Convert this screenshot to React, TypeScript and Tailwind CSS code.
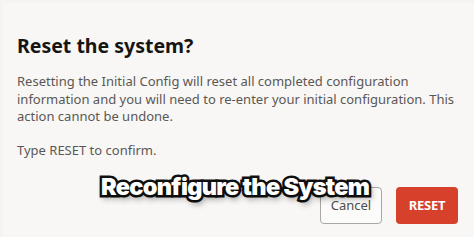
export default function App() {
  return (
    <div className="relative h-[237px] w-[474px] overflow-hidden bg-[#f4f3f1] font-['Noto_Sans',sans-serif]">
      <div className="ml-[3px] mt-[3px] flex h-[234px] flex-col bg-[#f8f7f5] pl-[14px] pr-[16px]">
        <h2 className="mt-[30px] text-[19.5px] font-bold leading-[26px] text-[#161513]">Reset the system?</h2>
        <p className="mt-[14px] text-[13px] leading-[17.5px] text-[#5a5856]">
          Resetting the Initial Config will reset all completed configuration information and you will need to
          re-enter your initial configuration. This action cannot be undone.
        </p>
        <p className="mt-[16px] text-[13px] leading-[17.5px] text-[#5a5856]">Type RESET to confirm.</p>
        <div className="mt-auto mb-[13px] flex justify-end gap-[14px]">
          <button className="h-[37px] w-[62px] rounded-[4px] border border-[#a9a7a4] bg-[#fbfbfa] text-[13px] text-[#4e4c4a]">
            Cancel
          </button>
          <button className="h-[37px] w-[62px] rounded-[4px] bg-[#d5412b] text-[13px] font-bold tracking-[-0.3px] text-white">
            RESET
          </button>
        </div>
      </div>
      <div className="absolute left-[101px] top-[172px] text-[23.5px] font-black leading-[30px] tracking-[-0.7px] text-white font-['Inter',sans-serif] [-webkit-text-stroke:5px_#111] [paint-order:stroke_fill] [text-shadow:2px_4px_6px_rgba(0,0,0,0.45)]">
        Reconfigure the System
      </div>
    </div>
  );
}
